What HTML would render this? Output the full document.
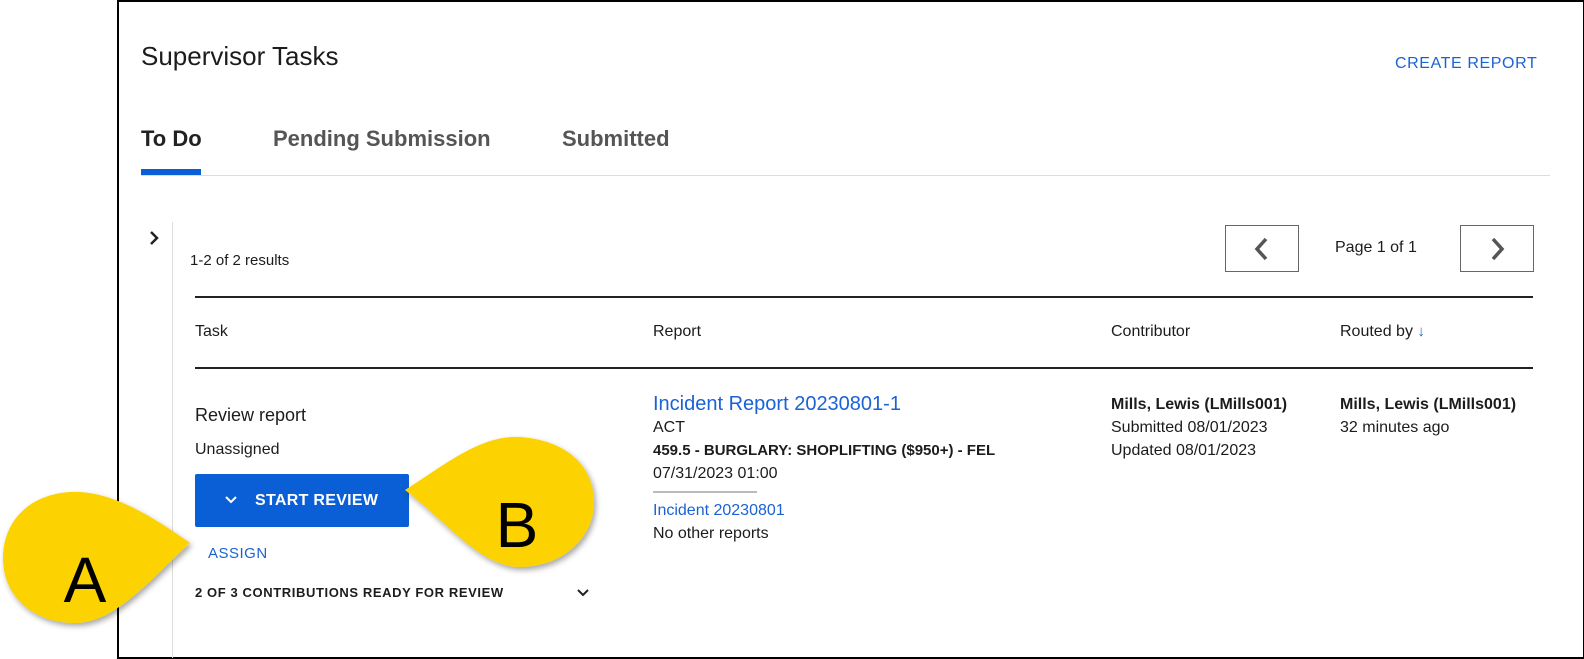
<!DOCTYPE html>
<html><head><meta charset="utf-8"><style>
body{margin:0;width:1584px;height:658px;background:#fff;font-family:"Liberation Sans",Arial,sans-serif;color:#1c1c1c;position:relative;overflow:hidden}
.a{position:absolute;white-space:nowrap}
.frame{position:absolute;left:117px;top:0;width:1464px;height:655px;border:2px solid #000}
.blue{color:#1a62d6}
.lh{line-height:23px;font-size:16px}
</style></head><body>
<div class="frame"></div>
<div class="a" style="left:141px;top:41px;font-size:26px;">Supervisor Tasks</div>
<div class="a blue" style="left:1395px;top:55px;font-size:16px;letter-spacing:0.6px">CREATE REPORT</div>
<div class="a" style="left:141px;top:126px;font-size:22px;font-weight:bold;color:#222">To Do</div>
<div class="a" style="left:273px;top:126px;font-size:22px;font-weight:bold;color:#555">Pending Submission</div>
<div class="a" style="left:562px;top:126px;font-size:22px;font-weight:bold;color:#555">Submitted</div>
<div class="a" style="left:141px;top:175px;width:1409px;height:1px;background:#ddd"></div>
<div class="a" style="left:141px;top:169px;width:60px;height:6px;background:#0a5fd6"></div>
<svg class="a" style="left:147px;top:230px" width="14" height="16"><path d="M4 2 L10 8 L4 14" stroke="#222" stroke-width="2.5" fill="none"/></svg>
<div class="a" style="left:172px;top:222px;width:1px;height:436px;background:#ddd"></div>
<div class="a" style="left:190px;top:252px;font-size:15px">1-2 of 2 results</div>
<div class="a" style="left:1225px;top:225px;width:72px;height:45px;border:1px solid #666"></div>
<svg class="a" style="left:1251px;top:236px" width="22" height="26"><path d="M15 3 L6 13 L15 23" stroke="#555" stroke-width="3.5" fill="none"/></svg>
<div class="a" style="left:1335px;top:239px;font-size:16px">Page 1 of 1</div>
<div class="a" style="left:1460px;top:225px;width:72px;height:45px;border:1px solid #666"></div>
<svg class="a" style="left:1486px;top:236px" width="22" height="26"><path d="M7 3 L16 13 L7 23" stroke="#555" stroke-width="3.5" fill="none"/></svg>
<div class="a" style="left:195px;top:296px;width:1338px;height:2px;background:#222"></div>
<div class="a" style="left:195px;top:323px;font-size:16px">Task</div>
<div class="a" style="left:653px;top:323px;font-size:16px">Report</div>
<div class="a" style="left:1111px;top:323px;font-size:16px">Contributor</div>
<div class="a" style="left:1340px;top:323px;font-size:16px">Routed by <span class="blue" style="font-size:15px">&#8595;</span></div>
<div class="a" style="left:195px;top:367px;width:1338px;height:2px;background:#222"></div>
<div class="a" style="left:195px;top:405px;font-size:18px">Review report</div>
<div class="a" style="left:195px;top:441px;font-size:16px">Unassigned</div>
<div class="a" style="left:195px;top:474px;width:214px;height:53px;background:#0a5fd6;border-radius:2px"></div>
<svg class="a" style="left:224px;top:495px" width="14" height="10"><path d="M2 2 L7 7 L12 2" stroke="#fff" stroke-width="2" fill="none"/></svg>
<div class="a" style="left:255px;top:492px;font-size:16px;color:#fff;font-weight:bold;letter-spacing:0.3px">START REVIEW</div>
<div class="a blue" style="left:208px;top:545px;font-size:15px;letter-spacing:0.5px">ASSIGN</div>
<div class="a" style="left:195px;top:585px;font-size:13px;font-weight:bold;letter-spacing:0.6px">2 OF 3 CONTRIBUTIONS READY FOR REVIEW</div>
<svg class="a" style="left:576px;top:588px" width="14" height="10"><path d="M2 2 L7 7 L12 2" stroke="#222" stroke-width="2" fill="none"/></svg>
<div class="a blue" style="left:653px;top:393px;font-size:20px">Incident Report 20230801-1</div>
<div class="a lh" style="left:653px;top:416px">ACT<br><b style="font-size:15px">459.5 - BURGLARY: SHOPLIFTING ($950+) - FEL</b><br>07/31/2023 01:00</div>
<div class="a" style="left:653px;top:491px;width:104px;height:2px;background:#bbb"></div>
<div class="a lh" style="left:653px;top:499px"><span class="blue">Incident 20230801</span><br>No other reports</div>
<div class="a lh" style="left:1111px;top:393px"><b>Mills, Lewis (LMills001)</b><br>Submitted 08/01/2023<br>Updated 08/01/2023</div>
<div class="a lh" style="left:1340px;top:393px"><b>Mills, Lewis (LMills001)</b><br>32 minutes ago</div>
<svg class="a" style="left:0;top:420px" width="620" height="220">
<defs><filter id="sh"><feDropShadow dx="2" dy="3" stdDeviation="3" flood-opacity="0.35"/></filter></defs>
<path filter="url(#sh)" fill="#fcd200" d="M190 123 C150 95 110 70 70 72 C25 75 3 105 3 138 C3 178 35 203 75 203 C115 203 150 160 190 123 Z"/>
<path filter="url(#sh)" fill="#fcd200" d="M405 70 C445 45 480 15 520 17 C565 20 594 45 594 82 C594 120 560 147 520 147 C480 147 445 100 405 70 Z"/>
<text x="85" y="182" font-family="Liberation Sans,sans-serif" font-size="64" text-anchor="middle" fill="#000">A</text>
<text x="517" y="127" font-family="Liberation Sans,sans-serif" font-size="64" text-anchor="middle" fill="#000">B</text>
</svg>
</body></html>
